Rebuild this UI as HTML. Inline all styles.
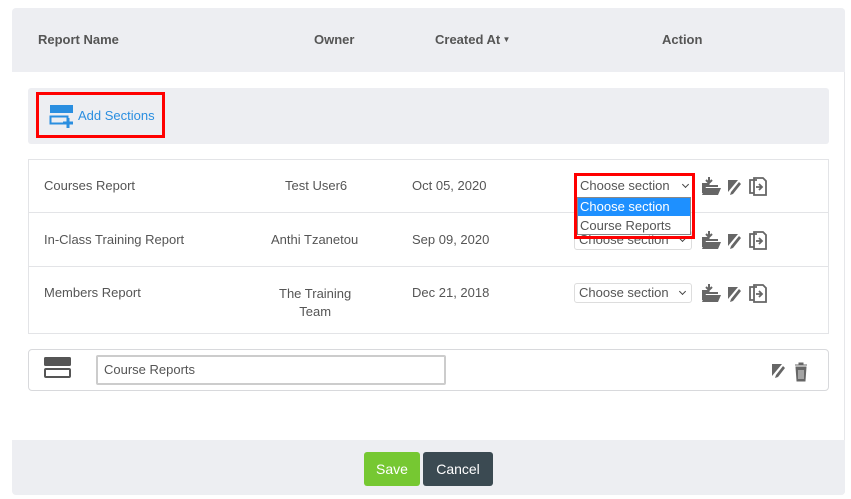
<!DOCTYPE html>
<html><head><meta charset="utf-8"><style>
*{box-sizing:border-box;margin:0;padding:0}
body{width:851px;height:499px;background:#fff;font-family:"Liberation Sans",sans-serif;font-size:13px;color:#555;position:relative;overflow:hidden}
.abs{position:absolute}
.wrap{left:12px;top:8px;width:833px;height:487px;border-radius:4px;background:#fff;overflow:hidden;border-right:1px solid #e6e7ea}
.hdr{left:12px;top:8px;width:833px;height:64px;background:#edeef2;border-radius:4px 4px 0 0}
.th{top:32px;font-weight:bold;color:#555}
.panel{left:28px;top:88px;width:801px;height:56px;background:#edeef2;border-radius:3px}
.tbl{left:28px;top:159px;width:801px;height:175px;border:1px solid #e3e4e7}
.line{left:29px;width:799px;height:1px;background:#e3e4e7}
.sel{width:118px;height:20px;border:1px solid #ddd;border-radius:3px;font-size:13px;padding-left:4px;line-height:18px;color:#555;background:#fff}
.sel:after{content:"";position:absolute;right:6px;top:5px;width:4px;height:4px;border-right:1.5px solid #444;border-bottom:1.5px solid #444;transform:rotate(45deg)}
.foot{left:12px;top:440px;width:833px;height:55px;background:#edeef2;border-radius:0 0 4px 4px}
.btn{top:452px;height:34px;border-radius:3px;color:#fff;font-size:14px;text-align:center;line-height:34px}
</style></head><body>
<div class="abs wrap"></div>
<div class="abs hdr"></div>
<div class="abs th" style="left:38px">Report Name</div>
<div class="abs th" style="left:314px">Owner</div>
<div class="abs th" style="left:435px">Created At<span style="font-size:8px;vertical-align:2px"> ▼</span></div>
<div class="abs th" style="left:662px">Action</div>

<div class="abs panel"></div>
<div class="abs" style="left:36px;top:92px;width:129px;height:46px;border:3px solid #f00"></div>
<svg class="abs" style="left:49px;top:104px" width="26" height="24" viewBox="0 0 26 24"><rect x="1" y="1" width="23" height="8" fill="#2a8ee0"/><rect x="1.5" y="12.5" width="17" height="7" fill="none" stroke="#2a8ee0" stroke-width="2"/><path d="M19 14v10M14 19h10" stroke="#2a8ee0" stroke-width="3"/></svg>
<div class="abs" style="left:78px;top:108px;color:#2a8ee0">Add Sections</div>

<div class="abs tbl"></div>
<div class="abs line" style="top:212px"></div>
<div class="abs line" style="top:266px"></div>

<div class="abs" style="left:44px;top:178px">Courses Report</div>
<div class="abs" style="left:285px;top:178px">Test User6</div>
<div class="abs" style="left:412px;top:178px">Oct 05, 2020</div>
<div class="abs" style="left:44px;top:232px">In-Class Training Report</div>
<div class="abs" style="left:271px;top:232px">Anthi Tzanetou</div>
<div class="abs" style="left:412px;top:232px">Sep 09, 2020</div>
<div class="abs" style="left:44px;top:285px">Members Report</div>
<div class="abs" style="left:279px;top:285px;text-align:center;line-height:18px">The Training<br>Team</div>
<div class="abs" style="left:412px;top:285px">Dec 21, 2018</div>

<div class="abs sel" style="left:574px;top:230px">Choose section</div>
<div class="abs sel" style="left:574px;top:283px">Choose section</div>
<div class="abs sel" style="left:576px;top:177px;border:none">Choose section</div>

<div class="abs" style="left:577px;top:197px;width:114px;height:38px;background:#fff;border:1px solid #888"></div>
<div class="abs" style="left:578px;top:198px;width:112px;height:18px;background:#1e90ff;color:#fff;padding-left:2px;line-height:18px">Choose section</div>
<div class="abs" style="left:578px;top:217px;padding-left:2px;line-height:18px">Course Reports</div>
<div class="abs" style="left:574px;top:173px;width:121px;height:66px;border:3px solid #f00"></div>

<svg width="0" height="0" style="position:absolute"><defs>
<g id="ic">
<path d="M0 6h6l2 2h8v2H4L1 16H0z M3 11h16l-3 7H0z" fill="#666"/>
<path d="M7 0v5M4 3l3 3 3-3" stroke="#666" stroke-width="2" fill="none"/>
<path d="M26 3h10l-10 12z M37 5l2 2-8 10-3 1 1-3z" fill="#666"/>
<path d="M55 3h-7v13h4 M52 1h9l3 3v14H52z" fill="none" stroke="#666" stroke-width="1.8"/>
<path d="M54 10h6M57 7l3 3-3 3" fill="none" stroke="#666" stroke-width="1.8"/>
</g></defs></svg>
<svg class="abs" style="left:702px;top:177px" width="70" height="20"><use href="#ic"/></svg>
<svg class="abs" style="left:702px;top:231px" width="70" height="20"><use href="#ic"/></svg>
<svg class="abs" style="left:702px;top:284px" width="70" height="20"><use href="#ic"/></svg>

<div class="abs" style="left:28px;top:349px;width:801px;height:42px;border:1px solid #d8d9dc;border-radius:4px"></div>
<svg class="abs" style="left:44px;top:357px" width="28" height="22"><rect x="0" y="0" width="27" height="9" rx="1.5" fill="#555"/><rect x="1" y="12" width="25" height="8" rx="1" fill="none" stroke="#555" stroke-width="2"/></svg>
<div class="abs" style="left:96px;top:355px;width:350px;height:30px;border:2px solid #ccc;border-radius:2px;padding-left:6px;line-height:26px">Course Reports</div>
<svg class="abs" style="left:771px;top:362px" width="40" height="20"><path d="M1 2h10L1 14z M12 4l2 2-7 9-3 1 1-3z" fill="#666"/><path d="M24 3h12M28 3V1h4v2M25 5h10l-1 14h-8z" fill="#666" stroke="#666" stroke-width="1"/><path d="M28 8v9M30 8v9M32 8v9" stroke="#fff" stroke-width="0.8"/></svg>

<div class="abs foot"></div>
<div class="abs btn" style="left:364px;width:56px;background:#76c832">Save</div>
<div class="abs btn" style="left:423px;width:70px;background:#3b4a52">Cancel</div>
</body></html>
